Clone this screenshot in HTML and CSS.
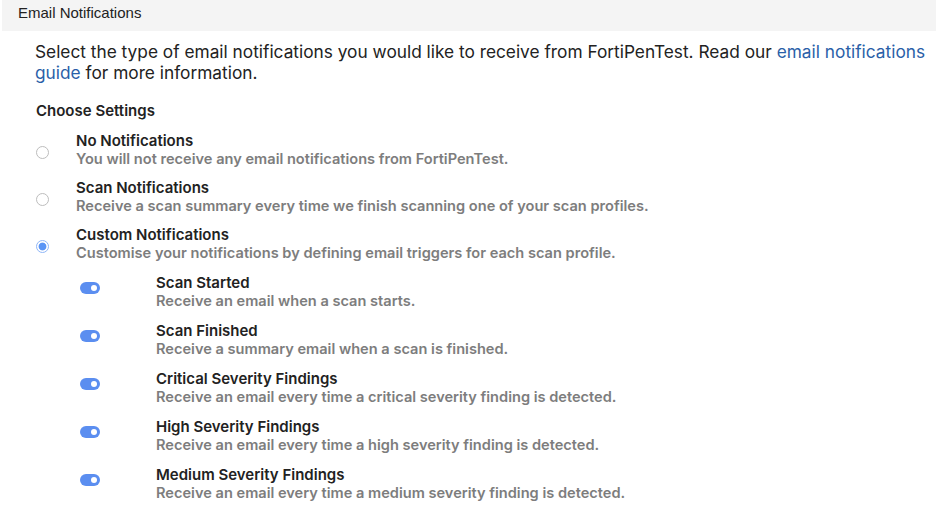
FILE: index.html
```html
<!DOCTYPE html>
<html>
<head>
<meta charset="utf-8">
<link rel="stylesheet" href="styles.css">
</head>
<body>
<div class="panel">
  <div class="panel-header">Email Notifications</div>
  <div class="panel-body">
    <p class="intro">Select the type of email notifications you would like to receive from FortiPenTest. Read our <a href="#">email notifications guide</a> for more information.</p>
    <div class="section-title">Choose Settings</div>
    <div class="options">
      <div class="option">
        <span class="radio"></span>
        <div class="text">
          <div class="title">No Notifications</div>
          <div class="desc">You will not receive any email notifications from FortiPenTest.</div>
        </div>
      </div>
      <div class="option">
        <span class="radio"></span>
        <div class="text">
          <div class="title">Scan Notifications</div>
          <div class="desc">Receive a scan summary every time we finish scanning one of your scan profiles.</div>
        </div>
      </div>
      <div class="option">
        <span class="radio checked"></span>
        <div class="text">
          <div class="title">Custom Notifications</div>
          <div class="desc">Customise your notifications by defining email triggers for each scan profile.</div>
        </div>
      </div>
    </div>
    <div class="triggers">
      <div class="trigger">
        <span class="toggle"></span>
        <div class="text">
          <div class="title">Scan Started</div>
          <div class="desc">Receive an email when a scan starts.</div>
        </div>
      </div>
      <div class="trigger">
        <span class="toggle"></span>
        <div class="text">
          <div class="title">Scan Finished</div>
          <div class="desc">Receive a summary email when a scan is finished.</div>
        </div>
      </div>
      <div class="trigger">
        <span class="toggle"></span>
        <div class="text">
          <div class="title">Critical Severity Findings</div>
          <div class="desc">Receive an email every time a critical severity finding is detected.</div>
        </div>
      </div>
      <div class="trigger">
        <span class="toggle"></span>
        <div class="text">
          <div class="title">High Severity Findings</div>
          <div class="desc">Receive an email every time a high severity finding is detected.</div>
        </div>
      </div>
      <div class="trigger">
        <span class="toggle"></span>
        <div class="text">
          <div class="title">Medium Severity Findings</div>
          <div class="desc">Receive an email every time a medium severity finding is detected.</div>
        </div>
      </div>
    </div>
  </div>
</div>
</body>
</html>
```
FILE: styles.css
```css
html, body {
  margin: 0;
  padding: 0;
  background: #ffffff;
}
body {
  font-family: Inter, "Noto Sans", sans-serif;
  color: #222;
}
.panel {
  padding-left: 2px;
}
.panel-header {
  background: #f4f4f4;
  height: 31px;
  line-height: 26px;
  padding-left: 16px;
  font-family: "Liberation Sans", Arial, sans-serif;
  font-size: 15px;
  color: #222;
}
.panel-body {
  padding-left: 33px;
}
.intro {
  margin: 10px 0 0 0;
  font-size: 17.3px;
  line-height: 21px;
  color: #222;
}
.intro a {
  color: #2a5fa8;
  text-decoration: none;
}
.section-title {
  margin-top: 18px;
  padding-left: 1px;
  font-size: 15px;
  font-weight: 600;
  line-height: 20px;
  color: #222;
}
.options {
  margin-top: 11px;
  display: flex;
  flex-direction: column;
  gap: 11px;
}
.option {
  display: flex;
  align-items: center;
}
.radio {
  box-sizing: border-box;
  width: 13px;
  height: 13px;
  border: 1px solid #bdbdbd;
  border-radius: 50%;
  margin-left: 1px;
  margin-right: 27px;
  flex: none;
  position: relative;
  top: 2px;
}
.radio.checked {
  border: 1px solid #8fb6f7;
  background: radial-gradient(circle, #5b95f5 0 3.5px, #ffffff 4.3px);
}
.text .title {
  font-size: 15px;
  font-weight: 600;
  line-height: 18px;
  color: #222;
}
.text .desc {
  font-size: 14.6px;
  font-weight: 600;
  line-height: 18px;
  color: #7d7d7d;
}
.triggers {
  margin-top: 12px;
  display: flex;
  flex-direction: column;
  gap: 12px;
}
.trigger {
  display: flex;
  align-items: center;
}
.toggle {
  box-sizing: border-box;
  width: 20px;
  height: 12px;
  border-radius: 6px;
  background: #5b8ef0;
  margin-left: 45px;
  margin-right: 56px;
  flex: none;
  position: relative;
  top: -4px;
}
.toggle::after {
  content: "";
  position: absolute;
  right: 3px;
  top: 3px;
  width: 6px;
  height: 6px;
  border-radius: 50%;
  background: #fff;
}
```
